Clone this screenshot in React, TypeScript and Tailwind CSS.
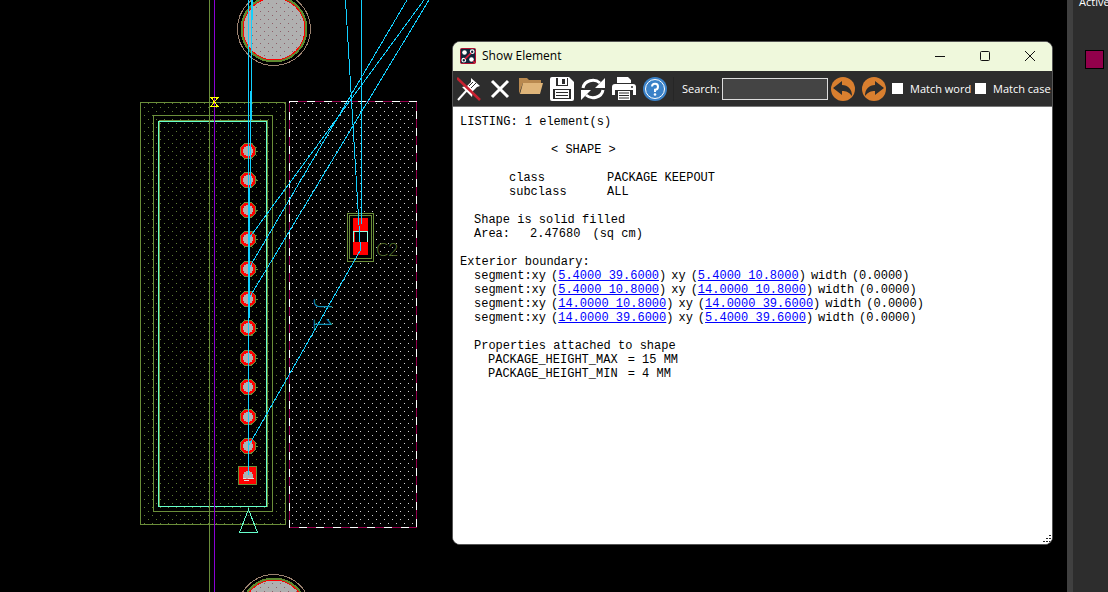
import type { ReactNode } from 'react'

const pinRows = [151, 180, 210, 239, 269, 299, 328, 358, 387, 417, 446]

const segments = [
  { from: '5.4000 39.6000', to: '5.4000 10.8000' },
  { from: '5.4000 10.8000', to: '14.0000 10.8000' },
  { from: '14.0000 10.8000', to: '14.0000 39.6000' },
  { from: '14.0000 39.6000', to: '5.4000 39.6000' },
]

export default function App() {
  return (
    <div className="flex h-screen overflow-hidden bg-black">
      <main className="relative min-w-0 flex-1 overflow-hidden">
        <BoardCanvas />
        <ShowElementWindow />
      </main>
      <div className="w-1.5 shrink-0 bg-[#404040]" />
      <SidePanel />
    </div>
  )
}

function SidePanel() {
  return (
    <aside className="w-[35px] shrink-0 overflow-hidden bg-[#2d2d2d] font-['Open_Sans',sans-serif] text-[11px] text-white">
      <div className="-mt-1 pl-1.5 leading-3">Active</div>
      <button
        type="button"
        aria-label="Active class colour"
        className="mt-[42px] ml-3 block size-[19px] border border-black bg-[#92004b]"
      />
    </aside>
  )
}

// ─── Window ───────────────────────────────────────────────────────────────────

function ShowElementWindow() {
  return (
    <section className="absolute top-[41px] left-[452px] flex h-[504px] w-[601px] flex-col overflow-hidden rounded-lg border border-[#555] bg-white">
      <header className="flex h-[29px] shrink-0 items-center bg-[#eff8dc] pb-0.5 pl-[7px] font-['Open_Sans',sans-serif] text-xs text-black">
        <AppLogo />
        <h1 className="ml-1.5 flex-1">Show Element</h1>
        <WindowButton label="Minimize">
          <path d="M0 5.5h10" />
        </WindowButton>
        <WindowButton label="Maximize">
          <rect x="0.5" y="0.5" width="9" height="9" rx="1" />
        </WindowButton>
        <WindowButton label="Close">
          <path d="M0 0l10 10M10 0L0 10" />
        </WindowButton>
      </header>
      <Toolbar />
      <Listing />
      <svg className="absolute right-0 bottom-0 size-2.5" viewBox="0 0 10 10" fill="#222" aria-hidden="true">
        <path d="M7 1h2v1H7zM4 4h2v1H4zM7 4h2v1H7zM1 7h2v1H1zM4 7h2v1H4zM7 7h2v1H7z" />
      </svg>
    </section>
  )
}

function WindowButton({ label, children }: { label: string; children: ReactNode }) {
  return (
    <button type="button" aria-label={label} className="flex h-full w-[45px] items-center justify-center">
      <svg className="size-2.5 overflow-visible" viewBox="0 0 10 10" fill="none" stroke="#111">
        {children}
      </svg>
    </button>
  )
}

function Toolbar() {
  return (
    <div className="flex h-[35px] shrink-0 items-center bg-[#2d2d2d] pl-1 font-['Open_Sans',sans-serif] text-[11px] text-white">
      <div className="flex gap-[7px]">
        <ToolButton label="Unpin">
          <path d="M14 1l9 8-3 1-4 4-1 6L5 10l5-1 4-4z" fill="#fff" />
          <path d="M10 13l-9 10" stroke="#fff" strokeWidth="2" />
          <path d="M12 9l4-4M14 11l5-5" stroke="#2d2d2d" />
          <path d="M0 1l23 22" stroke="#c8202f" strokeWidth="2.5" />
        </ToolButton>
        <ToolButton label="Close">
          <path d="M4 4l16 16M20 4L4 20" stroke="#fff" strokeWidth="3" />
        </ToolButton>
        <ToolButton label="Open">
          <path d="M0 17V1h8l2 2h12v3H4z" fill="#b9894f" />
          <path d="M1 17L4 6h20l-3 11z" fill="#dfb57a" />
        </ToolButton>
        <ToolButton label="Save">
          <path d="M2 0h17l5 5v17a2 2 0 01-2 2H2a2 2 0 01-2-2V2a2 2 0 012-2z" fill="#fff" />
          <path d="M6 1h12v8H6zM3 12h18v10H3z" fill="#2d2d2d" />
          <path d="M8 1h9v7H8zM5 13h14v8H5z" fill="#fff" />
          <path d="M12 2h3v5h-3z" fill="#2d2d2d" />
          <path d="M6 15.5h12M6 18.5h12" stroke="#2d2d2d" />
        </ToolButton>
        <ToolButton label="Refresh">
          <path d="M2 11a10 9 0 0117-5M22 13a10 9 0 01-17 5" stroke="#fff" strokeWidth="3" />
          <path d="M24 1v10H14zM0 23V13h10z" fill="#fff" />
        </ToolButton>
        <ToolButton label="Print">
          <path d="M5 0h11l3 3v4H5z" fill="#fff" />
          <path d="M0 10a3 3 0 013-3h18a3 3 0 013 3v8H0z" fill="#fff" />
          <path d="M4 6.5h16" stroke="#2d2d2d" />
          <path d="M3 13h18v5h-2v6H5v-6H3z" fill="#2d2d2d" />
          <path d="M6 14h12v9H6z" fill="#fff" />
          <path d="M7 16h10M7 18.5h10M7 21h10" stroke="#2d2d2d" />
          <circle cx="20" cy="10" r="1" fill="#2d2d2d" />
        </ToolButton>
        <ToolButton label="Help">
          <circle cx="12" cy="12" r="12" fill="#3b82c8" />
          <circle cx="12" cy="12" r="9.5" stroke="#fff" />
          <path d="M9 9.5a3 3 0 113 3.2V15" stroke="#fff" strokeWidth="2" />
          <circle cx="12" cy="17.5" r="1.3" fill="#fff" />
        </ToolButton>
      </div>
      <div className="ml-1.5 h-6 w-px bg-[#262626]" />
      <label htmlFor="search" className="ml-2 w-10 pt-0.5">
        Search:
      </label>
      <input
        id="search"
        type="text"
        className="h-[22px] min-w-0 flex-1 border border-[#ddd] bg-[#444] px-1 text-white"
      />
      <div className="ml-[3px] flex gap-[7px]">
        <ToolButton label="Previous">
          <circle cx="12" cy="12" r="12" fill="#d97f2f" />
          <path d="M2 11l9-7v4c6 0 10 4 10 11-3-4-6-5-10-5v4z" fill="#2d2d2d" />
        </ToolButton>
        <ToolButton label="Next">
          <circle cx="12" cy="12" r="12" fill="#d97f2f" />
          <path d="M22 11l-9-7v4c-6 0-10 4-10 11 3-4 6-5 10-5v4z" fill="#2d2d2d" />
        </ToolButton>
      </div>
      <Check label="Match word" />
      <Check label="Match case" />
    </div>
  )
}

function ToolButton({ label, children }: { label: string; children: ReactNode }) {
  return (
    <button type="button" aria-label={label} className="size-6 shrink-0">
      <svg className="size-6" viewBox="0 0 24 24" fill="none">
        {children}
      </svg>
    </button>
  )
}

function Check({ label }: { label: string }) {
  return (
    <label className="flex w-[83px] shrink-0 items-center gap-[7px] pl-1.5 whitespace-nowrap">
      <input type="checkbox" className="size-[11px] shrink-0 appearance-none bg-white checked:bg-[#3b82c8]" />
      <span className="pt-0.5">{label}</span>
    </label>
  )
}

function AppLogo() {
  return (
    <svg className="size-4" viewBox="0 0 16 16" fill="none" aria-hidden="true">
      <rect x="0.5" y="0.5" width="15" height="15" rx="1" fill="#10253a" stroke="#b01030" />
      <circle cx="4.5" cy="4.5" r="2.3" fill="#fff" />
      <circle cx="12.2" cy="3.7" r="1.8" stroke="#fff" strokeWidth="1.2" />
      <circle cx="3.8" cy="12.2" r="1.8" stroke="#fff" strokeWidth="1.2" />
      <circle cx="11.5" cy="11.5" r="2.3" fill="#fff" />
      <path d="M5 11l6-6M13 13l2 2" stroke="#e01838" strokeWidth="1.6" />
    </svg>
  )
}

// ─── Listing ──────────────────────────────────────────────────────────────────

function Listing() {
  return (
    <div className="flex-1 overflow-hidden border-t border-[#777] bg-white pt-2 pl-[7px] font-['Liberation_Mono',monospace] text-[12px] leading-[14px] whitespace-pre text-black">
      <p>LISTING: 1 element(s)</p>
      <p className="mt-3.5 pl-[91px]">{'< SHAPE >'}</p>
      <dl className="mt-3.5 grid grid-cols-[98px_1fr] pl-[49px]">
        <dt>class</dt>
        <dd>PACKAGE KEEPOUT</dd>
        <dt>subclass</dt>
        <dd>ALL</dd>
      </dl>
      <p className="mt-3.5 pl-3.5">Shape is solid filled</p>
      <p className="flex gap-5 pl-3.5">
        <span>Area:</span>
        <span>2.47680</span>
        <span className="-ml-2">(sq cm)</span>
      </p>
      <p className="mt-3.5">Exterior boundary:</p>
      {segments.map((s) => (
        <p key={s.from} className="flex gap-[5px] pl-3.5">
          <span>segment:xy</span>
          <Point at={s.from} />
          <span>xy</span>
          <Point at={s.to} />
          <span>width</span>
          <span>(0.0000)</span>
        </p>
      ))}
      <p className="mt-3.5 pl-3.5">Properties attached to shape</p>
      <Property name="PACKAGE_HEIGHT_MAX" value="15 MM" />
      <Property name="PACKAGE_HEIGHT_MIN" value="4 MM" />
    </div>
  )
}

function Point({ at }: { at: string }) {
  return (
    <span>
      (
      <a href="#point" className="text-[#0000ff] underline">
        {at}
      </a>
      )
    </span>
  )
}

function Property({ name, value }: { name: string; value: string }) {
  return (
    <p className="flex gap-2.5 pl-7">
      <span>{name}</span>
      <span>= {value}</span>
    </p>
  )
}

// ─── Board ────────────────────────────────────────────────────────────────────

function BoardCanvas() {
  return (
    <svg
      className="absolute top-0 left-0"
      width="1067"
      height="592"
      viewBox="0 0 1067 592"
      fill="none"
      shapeRendering="crispEdges"
      role="img"
      aria-label="Board layout"
    >
      <defs>
        <pattern id="green-dots" width="8" height="8" patternUnits="userSpaceOnUse">
          <path d="M0 3h1v1H0zM4 7h1v1H4z" fill="#5d7a33" />
        </pattern>
        <pattern id="white-dots" width="8" height="8" patternUnits="userSpaceOnUse">
          <path d="M4 3h1v1H4zM0 7h1v1H0z" fill="#d5d5d5" />
        </pattern>
        <pattern id="hole-dots" width="8" height="8" patternUnits="userSpaceOnUse">
          <path d="M4 3h1v1H4zM0 7h1v1H0z" fill="#8c5f68" />
        </pattern>
      </defs>

      {/* connector outline */}
      <rect x="140.5" y="102.5" width="145" height="422" fill="url(#green-dots)" stroke="#6b8e3a" />
      <rect x="153.5" y="115.5" width="119" height="396" stroke="#6b8e3a" />
      <rect x="159.5" y="120.5" width="108" height="386" stroke="#6b8e3a" />
      <rect x="158.5" y="121.5" width="108" height="385" stroke="#66ffcc" />
      <path d="M248.5 509.5L239.5 532.5h18z" stroke="#66ffcc" />

      {/* keepout */}
      <rect x="289.5" y="101.5" width="127" height="426" fill="url(#white-dots)" stroke="#92004b" />
      <rect x="289.5" y="101.5" width="127" height="426" stroke="#fff" strokeDasharray="8 9" />

      <MountingHole cy={29} />
      <MountingHole cy={611} />

      {pinRows.map((y) => (
        <g key={y}>
          <circle cx="248" cy={y} r="8" fill="#f00" stroke="#6b8e3a" />
          <path d={`M256 ${y + 0.5}h2`} stroke="#6b8e3a" />
          <circle cx="248" cy={y} r="5" fill="#b0b0b0" />
        </g>
      ))}
      <rect x="238.5" y="466.5" width="18" height="18" fill="#f00" stroke="#6b8e3a" />
      <path d="M243 479v-3a5 5 0 0110 0v3z" fill="#b0b0b0" />
      <path d="M243 478.5h3m2 0h6M244 480.5h5" stroke="#ddd" />

      {/* C2 */}
      <rect x="347.5" y="213.5" width="26" height="48" fill="#000" stroke="#6b8e3a" />
      <rect x="349.5" y="215.5" width="22" height="43" stroke="#6b8e3a" />
      <rect x="353" y="218" width="15" height="37" fill="#f00" />
      <rect x="355" y="232" width="12" height="10" fill="#000" />
      <path d="M353.5 242v-10.5h14V242" stroke="#99ffdd" />

      <path d="M209.5 0v592" stroke="#6b8e3a" />
      <path d="M214.5 0v592" stroke="#8a00d4" />
      <path d="M210 97.5h9M210 106.5h9M211.5 98l6 8M217.5 98l-6 8" stroke="#ff0" />

      {/* ratsnest */}
      <g stroke="#12d0ff">
        <path d="M248.5 0v475M251.5 0v120M252.5 0v20M250.5 91v97M249.5 188v130" />
        <path d="M345.5 0L360.5 250M361.5 0v224" />
        <path d="M407 0L248.5 269M424 0L248.5 239M429 0L248.5 299M360.5 250L248.5 446" />
      </g>

      <g fontFamily="Lato, sans-serif" fontWeight="300" shapeRendering="auto">
        <text x="376 388" y="256" fontSize="18" fill="#5a7831">
          C2
        </text>
        <text x="0 17" transform="translate(314 299) rotate(90)" fontSize="26" fill="#108fb4">
          J1
        </text>
      </g>
    </svg>
  )
}

function MountingHole({ cy }: { cy: number }) {
  return (
    <g>
      <circle cx="274" cy={cy} r="36.5" stroke="#9c8270" />
      <circle cx="274" cy={cy} r="32.5" stroke="#5f8a30" strokeWidth="2" />
      <circle cx="274" cy={cy} r="31" fill="#b0b0b0" stroke="#f00" />
      <circle cx="274" cy={cy} r="30" fill="url(#hole-dots)" />
    </g>
  )
}
